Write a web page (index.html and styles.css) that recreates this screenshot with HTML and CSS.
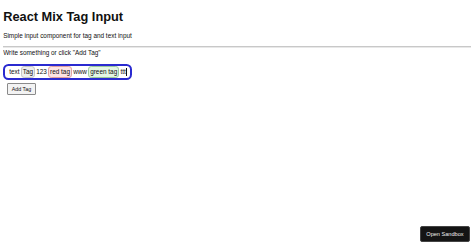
FILE: index.html
```html
<!DOCTYPE html>
<html>
<head>
<meta charset="utf-8">
<link rel="stylesheet" href="styles.css">
</head>
<body>
<h1 class="title">React Mix Tag Input</h1>
<p class="subtitle">Simple input component for tag and text input</p>
<hr class="rule">
<div class="hint">Write something or click "Add Tag"</div>
<div class="editor-wrap">
  <div class="editor">
    <span class="txt">text</span><span class="tag tag-gray">Tag</span><span class="txt">123</span><span class="tag tag-red">red tag</span><span class="txt">www</span><span class="tag tag-green">green tag</span><span class="txt">ttt</span><span class="caret"></span>
  </div>
</div>
<div class="actions"><button class="add-btn">Add Tag</button></div>
<button class="sandbox-btn">Open Sandbox</button>
</body>
</html>
```
FILE: styles.css
```css
html, body {
  background: #ffffff;
}
body {
  margin: 3.2px;
  font-family: "Liberation Sans", Arial, Helvetica, sans-serif;
  font-size: 6.4px;
  color: #111;
}
.title {
  font-size: 12.8px;
  font-weight: bold;
  margin: 5.6px 0 8.6px;
  color: #111;
}
.subtitle {
  margin: 6.4px 0;
}
.rule {
  margin: 3.2px 0 1.4px;
  border: none;
  border-top: 0.8px solid #c8c8c8;
  border-bottom: 0.8px solid #e8e8e8;
  height: 0;
}
.hint {
  margin: 0;
}
.editor-wrap {
  margin-top: 7.5px;
}
.editor {
  display: inline-flex;
  align-items: center;
  box-sizing: border-box;
  height: 16.4px;
  padding: 0 3px 0 4px;
  border: 2px solid #2a2ad0;
  border-radius: 5.5px;
  white-space: nowrap;
  font-size: 6.4px;
}
.txt {
  margin: 0;
}
.tag {
  display: inline-block;
  border: 0.8px solid #999;
  border-radius: 3.2px;
  padding: 1.4px 1.2px;
  margin: 0 1px;
  line-height: 7px;
}
.tag-gray {
  background: #ededed;
  border-color: #c4c4c4;
}
.tag-red {
  background: #fde4e4;
  border-color: #e0a0a0;
}
.tag-green {
  background: #e4f6e4;
  border-color: #9cc89c;
}
.caret {
  display: inline-block;
  width: 0.8px;
  height: 8px;
  background: #111;
  margin-left: 0.4px;
}
.actions {
  margin-top: 2.5px;
  padding-left: 4px;
}
.add-btn {
  font-family: "Liberation Sans", Arial, sans-serif;
  font-size: 5.3px;
  padding: 2.2px 3.6px;
  background: #f3f3f3;
  border: 0.6px solid #8a8a8a;
  border-radius: 1px;
  color: #111;
}
.sandbox-btn {
  position: fixed;
  right: 4px;
  bottom: 6px;
  font-family: "Liberation Sans", Arial, sans-serif;
  font-size: 5.6px;
  padding: 4px 5.4px;
  background: #141414;
  color: #f0f0f0;
  border: 0.6px solid #444;
  border-radius: 2px;
}
```
